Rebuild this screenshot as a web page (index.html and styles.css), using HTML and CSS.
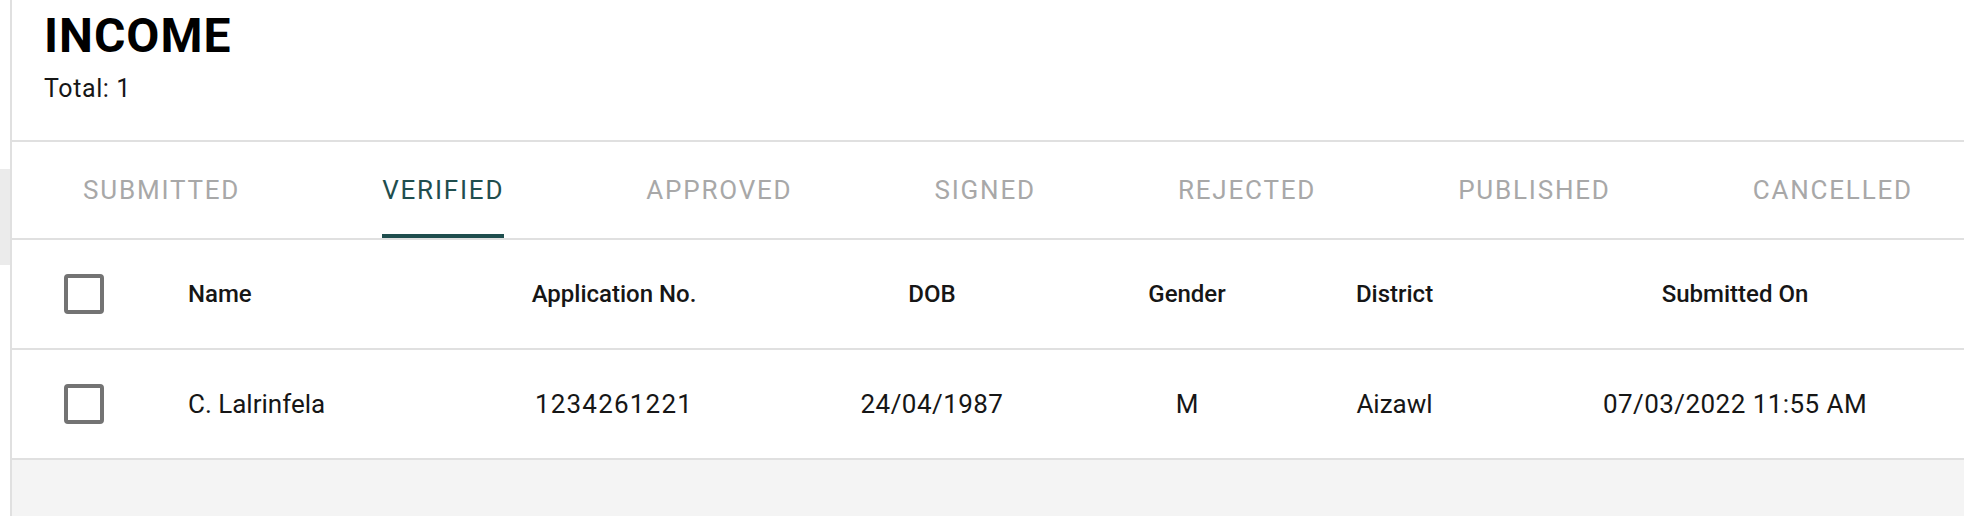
FILE: index.html
```html
<!DOCTYPE html>
<html lang="en">
<head>
<meta charset="utf-8">
<title>Income</title>
<link rel="stylesheet" href="styles.css">
</head>
<body>
<div class="layout">
  <aside class="sidebar"><div class="sidebar-item"></div></aside>
  <main class="main">
    <header class="page-header">
      <h1 class="title">INCOME</h1>
      <p class="total">Total: 1</p>
    </header>
    <nav class="tabs">
      <span class="tab">SUBMITTED</span>
      <span class="tab active">VERIFIED</span>
      <span class="tab">APPROVED</span>
      <span class="tab">SIGNED</span>
      <span class="tab">REJECTED</span>
      <span class="tab">PUBLISHED</span>
      <span class="tab">CANCELLED</span>
    </nav>
    <div class="table">
      <div class="row head">
        <div class="cell check"><span class="checkbox"></span></div>
        <div class="cell left">Name</div>
        <div class="cell">Application No.</div>
        <div class="cell">DOB</div>
        <div class="cell">Gender</div>
        <div class="cell">District</div>
        <div class="cell">Submitted On</div>
      </div>
      <div class="row body">
        <div class="cell check"><span class="checkbox"></span></div>
        <div class="cell left">C. Lalrinfela</div>
        <div class="cell digits">1234261221</div>
        <div class="cell date">24/04/1987</div>
        <div class="cell">M</div>
        <div class="cell">Aizawl</div>
        <div class="cell date">07/03/2022 11:55 AM</div>
      </div>
    </div>
    <div class="footer-space"></div>
  </main>
</div>
</body>
</html>
```
FILE: styles.css
```css
html, body {
  margin: 0;
  padding: 0;
  height: 100%;
  background: #ffffff;
  font-family: Roboto, "Noto Sans", Arial, sans-serif;
  color: #161616;
}

.layout {
  display: flex;
  height: 516px;
  overflow: hidden;
}

.sidebar {
  width: 10px;
  flex: none;
}

.sidebar-item {
  margin-top: 169px;
  height: 96px;
  background: #ebebeb;
}

.main {
  flex: 1;
  display: flex;
  flex-direction: column;
  border-left: 2px solid #e0e0e0;
  background: #ffffff;
}

.page-header {
  height: 142px;
  box-sizing: border-box;
  padding: 12px 0 0 32px;
  border-bottom: 2px solid #e0e0e0;
}

.title {
  margin: 0;
  font-size: 48px;
  line-height: 48px;
  font-weight: 700;
  color: #000000;
  letter-spacing: 1px;
}

.total {
  margin: 17px 0 0;
  font-size: 25px;
  line-height: 24px;
  letter-spacing: 0.6px;
  color: #161616;
}

.tabs {
  display: flex;
  gap: 142px;
  padding-left: 71px;
  border-bottom: 2px solid #e0e0e0;
}

.tab {
  padding: 35px 0 31px;
  font-size: 26px;
  line-height: 26px;
  letter-spacing: 1.8px;
  color: #a8a8a8;
  border-bottom: 4px solid transparent;
  white-space: nowrap;
}

.tab.active {
  color: #1f4e4e;
  border-bottom-color: #1f4e4e;
}

.table {
  display: flex;
  flex-direction: column;
}

.row {
  display: grid;
  grid-template-columns: 176px 267px 318px 318px 192px 223px 1fr;
  height: 108px;
  align-items: center;
  border-bottom: 2px solid #e0e0e0;
}

.row.head .cell {
  font-size: 24px;
  font-weight: 500;
  color: #161616;
}

.row.body .cell {
  font-size: 26px;
  font-weight: 400;
  color: #161616;
}

.cell {
  text-align: center;
  white-space: nowrap;
}

.cell.left {
  text-align: left;
}

.row.body .cell.digits {
  letter-spacing: 1.2px;
}

.row.body .cell.date {
  letter-spacing: 0.45px;
}

.cell.check {
  padding-left: 52px;
  display: flex;
  align-items: center;
}

.checkbox {
  display: block;
  width: 40px;
  height: 40px;
  box-sizing: border-box;
  border: 4px solid #737373;
  border-radius: 4px;
  background: #ffffff;
}

.footer-space {
  flex: 1;
  background: #f4f4f4;
}
```
